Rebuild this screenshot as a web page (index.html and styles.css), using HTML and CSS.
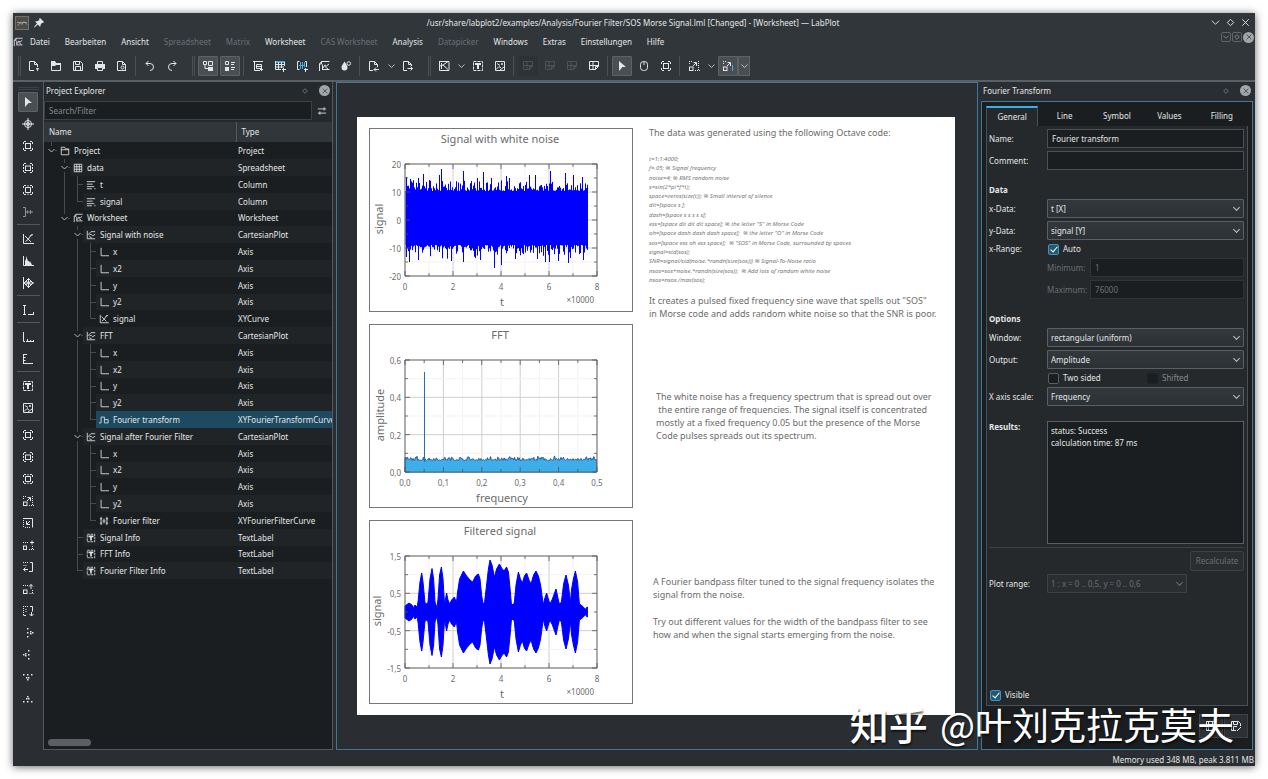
FILE: index.html
```html
<!DOCTYPE html>
<html lang="de">
<head>
  <meta charset="UTF-8">
  <meta name="viewport" content="width=device-width, initial-scale=1.0">
  <title>SOS Morse Signal.lml - LabPlot</title>
  <link rel="stylesheet" href="styles.css">
</head>
<body>

<div class="window">

  <!-- Title bar -->
  <header class="titlebar">
    <div class="title-left"><span class="app-icon" data-icon="app"></span><span data-icon="pin"></span></div>
    <div class="title-text">/usr/share/labplot2/examples/Analysis/Fourier Filter/SOS Morse Signal.lml [Changed] - [Worksheet] — LabPlot</div>
    <div class="title-right">
      <button aria-label="Minimize" data-icon="down"></button>
      <button aria-label="Maximize" data-icon="diamond"></button>
      <button aria-label="Close" data-icon="close"></button>
    </div>
  </header>

  <!-- Menu -->
  <nav class="menubar">
    <span class="menu-icon" data-icon="worksheet"></span>
    <button>Datei</button>
    <button>Bearbeiten</button>
    <button>Ansicht</button>
    <button disabled>Spreadsheet</button>
    <button disabled>Matrix</button>
    <button>Worksheet</button>
    <button disabled>CAS Worksheet</button>
    <button>Analysis</button>
    <button disabled>Datapicker</button>
    <button>Windows</button>
    <button>Extras</button>
    <button>Einstellungen</button>
    <button>Hilfe</button>
    <div class="mdi-buttons">
      <button class="boxed" aria-label="Minimize worksheet" data-icon="down"></button>
      <button class="boxed" aria-label="Restore worksheet" data-icon="diamond"></button>
      <button class="round-close" aria-label="Close worksheet" data-icon="close"></button>
    </div>
  </nav>

  <!-- Toolbar -->
  <div class="toolbar">
    <i class="grip"></i>
    <button class="tool" aria-label="New" data-icon="new"></button>
    <button class="tool" aria-label="Open" data-icon="open"></button>
    <button class="tool" aria-label="Save" data-icon="save"></button>
    <button class="tool" aria-label="Print" data-icon="print"></button>
    <button class="tool" aria-label="Print preview" data-icon="preview"></button>
    <i class="sep"></i>
    <button class="tool" aria-label="Undo" data-icon="undo"></button>
    <button class="tool" aria-label="Redo" data-icon="redo"></button>
    <i class="grip spaced"></i>
    <button class="tool checked" aria-label="Project explorer" data-icon="explorer"></button>
    <button class="tool checked" aria-label="Properties" data-icon="properties"></button>
    <i class="sep"></i>
    <button class="tool" aria-label="New workbook" data-icon="workbook"></button>
    <button class="tool" aria-label="New spreadsheet" data-icon="sheetadd"></button>
    <button class="tool" aria-label="New matrix" data-icon="matrixadd"></button>
    <button class="tool" aria-label="New worksheet" data-icon="worksheet"></button>
    <button class="tool" aria-label="Color maps" data-icon="drop"></button>
    <i class="sep"></i>
    <button class="tool" aria-label="Import" data-icon="import"></button>
    <button class="drop" aria-label="Import menu" data-icon="down"></button>
    <button class="tool" aria-label="Export" data-icon="export"></button>
    <i class="grip spaced"></i>
    <button class="tool" aria-label="Add plot" data-icon="plot"></button>
    <button class="drop" aria-label="Plot menu" data-icon="down"></button>
    <button class="tool" aria-label="Add text" data-icon="text"></button>
    <button class="tool" aria-label="Add image" data-icon="image"></button>
    <i class="sep"></i>
    <button class="tool shaded" disabled aria-label="Vertical layout" data-icon="layout"></button>
    <button class="tool" disabled aria-label="Horizontal layout" data-icon="layout"></button>
    <button class="tool" disabled aria-label="Grid layout" data-icon="layout"></button>
    <button class="tool" aria-label="Break layout" data-icon="layout"></button>
    <i class="sep"></i>
    <button class="tool checked" aria-label="Select" data-icon="pointer"></button>
    <button class="tool" aria-label="Navigate" data-icon="mouse"></button>
    <button class="tool" aria-label="Zoom selection" data-icon="select"></button>
    <i class="sep"></i>
    <button class="tool" aria-label="Zoom" data-icon="zoomin"></button>
    <button class="drop" aria-label="Zoom menu" data-icon="down"></button>
    <button class="tool checked" aria-label="Magnification" data-icon="magnify"></button>
    <button class="drop checked" aria-label="Magnification menu" data-icon="down"></button>
  </div>

  <main class="content">

    <!-- Plot tools -->
    <div class="side-tools">
      <i class="hgrip"></i>
      <button class="tool checked" aria-label="Select and edit" data-icon="pointer"></button>
      <button class="tool" aria-label="Crosshair" data-icon="cross"></button>
      <button class="tool" aria-label="Select region" data-icon="select"></button>
      <button class="tool" aria-label="Select x region" data-icon="selectx"></button>
      <button class="tool" aria-label="Select y region" data-icon="selecty"></button>
      <button class="tool dim" aria-label="Cursor" data-icon="cursor"></button>
      <i class="hsep"></i>
      <button class="tool" aria-label="Add curve" data-icon="curve"></button>
      <button class="tool" aria-label="Add histogram" data-icon="histogram"></button>
      <button class="tool" aria-label="Add equation curve" data-icon="equation"></button>
      <i class="hsep"></i>
      <button class="tool" aria-label="Add legend" data-icon="legend"></button>
      <i class="hsep"></i>
      <button class="tool" aria-label="Add horizontal axis" data-icon="axisx"></button>
      <button class="tool" aria-label="Add vertical axis" data-icon="axisy"></button>
      <i class="hsep"></i>
      <button class="tool" aria-label="Add label" data-icon="text"></button>
      <button class="tool" aria-label="Add picture" data-icon="image"></button>
      <i class="hsep"></i>
      <button class="tool" aria-label="Auto scale" data-icon="select"></button>
      <button class="tool" aria-label="Auto scale x" data-icon="selectx"></button>
      <button class="tool" aria-label="Auto scale y" data-icon="selecty"></button>
      <button class="tool" aria-label="Zoom in" data-icon="zoomin"></button>
      <button class="tool" aria-label="Zoom out" data-icon="zoomout"></button>
      <button class="tool" aria-label="Zoom in x" data-icon="zoominx"></button>
      <button class="tool" aria-label="Zoom out x" data-icon="zoomoutx"></button>
      <button class="tool" aria-label="Zoom in y" data-icon="zoominy"></button>
      <button class="tool" aria-label="Zoom out y" data-icon="zoomouty"></button>
      <button class="tool" aria-label="Shift left" data-icon="shiftl"></button>
      <button class="tool" aria-label="Shift right" data-icon="shiftr"></button>
      <button class="tool" aria-label="Shift up" data-icon="shiftu"></button>
      <button class="tool" aria-label="Shift down" data-icon="shiftd"></button>
    </div>

    <!-- Project Explorer -->
    <section class="explorer">
      <div class="dock-title">
        <h2>Project Explorer</h2>
        <button aria-label="Float" data-icon="diamond"></button>
        <button class="round-close" aria-label="Close" data-icon="close"></button>
      </div>
      <div class="search">
        <input type="text" placeholder="Search/Filter" aria-label="Search/Filter">
        <button aria-label="Filter options" data-icon="options"></button>
      </div>
      <div class="tree-view">
        <table class="tree">
          <thead><tr><th>Name</th><th>Type</th></tr></thead>
          <tbody id="tree"></tbody>
        </table>
        <div class="scroll-thumb"></div>
      </div>
    </section>

    <!-- Worksheet -->
    <section class="worksheet">
      <div class="paper">
        <svg class="plot" id="plotNoise" viewBox="0 0 264 184"></svg>
        <div class="note first">
          <p>The data was generated using the following Octave code:</p>
          <div class="code">
            <span>t=1:1:4000;</span>
            <span>f=.05; % Signal frequency</span>
            <span>noise=4; % RMS random noise</span>
            <span>s=sin(2*pi*f*t);</span>
            <span>space=zeros(size(t)); % Small interval of silence</span>
            <span>dit=[space s ];</span>
            <span>dash=[space s s s s s];</span>
            <span>ess=[space dit dit dit space]; % the letter "S" in Morse Code</span>
            <span>oh=[space dash dash dash space];  % the letter "O" in Morse Code</span>
            <span>sos=[space ess oh ess space];  % "SOS" in Morse Code, surrounded by spaces</span>
            <span>signal=std(sos);</span>
            <span>SNR=signal/std(noise.*randn(size(sos))) % Signal-To-Noise ratio</span>
            <span>nsos=sos+noise.*randn(size(sos));  % Add lots of random white noise</span>
            <span>nsos=nsos./max(sos);</span>
          </div>
          <p>It creates a pulsed fixed frequency sine wave that spells out "SOS"<br>in Morse code and adds random white noise so that the SNR is poor.</p>
        </div>
        <svg class="plot" id="plotFft" viewBox="0 0 264 184"></svg>
        <div class="note middle">
          <p>The white noise has a frequency spectrum that is spread out over<br>&nbsp;the entire range of frequencies. The signal itself is concentrated<br>mostly at a fixed frequency 0.05 but the presence of the Morse<br>Code pulses spreads out its spectrum.</p>
        </div>
        <svg class="plot" id="plotFiltered" viewBox="0 0 264 184"></svg>
        <div class="note last">
          <p>A Fourier bandpass filter tuned to the signal frequency isolates the<br>signal from the noise.</p>
          <p>Try out different values for the width of the bandpass filter to see<br>how and when the signal starts emerging from the noise.</p>
        </div>
      </div>
    </section>

    <!-- Properties -->
    <section class="properties">
      <div class="dock-title">
        <h2>Fourier Transform</h2>
        <button aria-label="Float" data-icon="diamond"></button>
        <button class="round-close" aria-label="Close" data-icon="close"></button>
      </div>
      <div class="prop-body">
        <div class="tabs">
          <button class="active">General</button>
          <button>Line</button>
          <button>Symbol</button>
          <button>Values</button>
          <button>Filling</button>
        </div>
        <form class="page">
          <div class="row"><label for="name">Name:</label><input id="name" type="text" value="Fourier transform"></div>
          <div class="row"><label for="comment">Comment:</label><input id="comment" type="text"></div>

          <h3>Data</h3>
          <div class="row"><label for="xdata">x-Data:</label><div class="select"><select id="xdata"><option>t [X]</option></select></div></div>
          <div class="row"><label for="ydata">y-Data:</label><div class="select"><select id="ydata"><option>signal [Y]</option></select></div></div>
          <div class="row low"><span>x-Range:</span><label class="check"><input type="checkbox" checked>Auto</label></div>
          <div class="row"><span></span><div class="sub"><label for="min">Minimum:</label><input id="min" type="text" value="1" disabled></div></div>
          <div class="row"><span></span><div class="sub"><label for="max">Maximum:</label><input id="max" type="text" value="76000" disabled></div></div>

          <h3>Options</h3>
          <div class="row"><label for="win">Window:</label><div class="select"><select id="win"><option>rectangular (uniform)</option></select></div></div>
          <div class="row"><label for="out">Output:</label><div class="select"><select id="out"><option>Amplitude</option></select></div></div>
          <div class="row low"><span></span><div class="checks"><label class="check"><input type="checkbox">Two sided</label><label class="check off"><input type="checkbox" disabled>Shifted</label></div></div>
          <div class="row"><label for="scale">X axis scale:</label><div class="select"><select id="scale"><option>Frequency</option></select></div></div>

          <div class="row results"><label for="results">Results:</label><textarea id="results" readonly>status: Success
calculation time: 87 ms</textarea></div>
          <hr>
          <button type="button" class="recalc" disabled>Recalculate</button>
          <div class="row"><label for="range">Plot range:</label><div class="select short"><select id="range" disabled><option>1 : x = 0 .. 0,5, y = 0 .. 0,6</option></select></div></div>
          <label class="check visible"><input type="checkbox" checked>Visible</label>
        </form>
        <div class="prop-buttons">
          <button aria-label="Save as default" data-icon="save"></button>
          <button aria-label="Save template" data-icon="saveas"></button>
        </div>
      </div>
    </section>
  </main>

  <footer class="statusbar">Memory used 348 MB, peak 3.811 MB</footer>
</div>

<div class="watermark"><b>知乎</b> @叶刘克拉克莫夫</div>

<script src="script.js"></script>
</body>
</html>
```
FILE: styles.css
```css
:root {
  --header: #31363b;
  --bg: #2a2e32;
  --view: #1b1e20;
  --alt: #212427;
  --line: #555a5e;
  --blue: #3f7796;
  --text: #e4e6e7;
  --dim: #6a6f73;
}

* {
  box-sizing: border-box;
}

body {
  margin: 0;
  padding: 13px;
  height: 100vh;
  background: #fff;
  color: var(--text);
  font-family: "Noto Sans", "Noto Sans CJK SC", sans-serif;
  font-size: 8px;
  line-height: 12px;
  overflow: hidden;
}

button, input, select, textarea {
  font: inherit;
  color: inherit;
}

button {
  display: flex;
  align-items: center;
  justify-content: center;
  padding: 0;
  border: 0;
  background: none;
  white-space: nowrap;
}

button:disabled {
  color: var(--dim);
}

svg {
  display: block;
}

.icon {
  width: 12px;
  height: 12px;
  fill: none;
  stroke: currentColor;
  stroke-width: 1;
}

.icon .f {
  fill: currentColor;
  stroke: none;
}

.icon .b {
  stroke: #3daee9;
}

.window {
  display: flex;
  flex-direction: column;
  height: 100%;
  background: var(--bg);
  box-shadow: 0 1px 8px rgba(0, 0, 0, 0.6);
}

/* title bar and menu */
.titlebar {
  display: flex;
  align-items: center;
  height: 19px;
  padding: 0 4px 0 2px;
  background: var(--header);
}

.title-left, .title-right {
  display: flex;
  align-items: center;
  flex: 0 0 60px;
  gap: 4px;
}

.title-right {
  justify-content: flex-end;
}

.title-right .icon {
  width: 11px;
  height: 11px;
}

.app-icon {
  width: 14px;
  background: #4c4c4a;
  border: 1px solid #777066;
  color: #9a9a9a;
}

.title-text {
  flex: 1;
  text-align: center;
}

.menubar {
  display: flex;
  align-items: center;
  gap: 15px;
  height: 19px;
  background: var(--header);
}

.menu-icon .icon {
  width: 10px;
  height: 10px;
}

.menu-icon {
  margin-right: -8px;
}

.mdi-buttons {
  display: flex;
  gap: 1px;
  margin: -9px 1px 0 auto;
}

.mdi-buttons .boxed {
  width: 10px;
  height: 10px;
  border: 1px solid #5f6468;
  border-radius: 2px;
  color: #a3a6a8;
}

.mdi-buttons .icon {
  width: 8px;
  height: 8px;
}

.round-close {
  width: 11px;
  height: 11px;
  border-radius: 50%;
  background: #a3a6a8;
  color: var(--bg);
}

.round-close .icon {
  width: 8px;
  height: 8px;
}

/* toolbar */
.toolbar {
  display: flex;
  align-items: center;
  gap: 2px;
  height: 31px;
  padding: 1px 0 0 5px;
  background: var(--header);
  border-bottom: 2px solid #596167;
}

.tool {
  flex: none;
  width: 20px;
  height: 20px;
  border-radius: 1px;
}

.drop {
  width: 10px;
  height: 20px;
}

.drop .icon {
  width: 9px;
}

.checked {
  background: #4a4f54;
  border: 1px solid #5d6266;
}

.drop.checked {
  margin-left: -2px;
  width: 12px;
}

.shaded {
  background: #2d3236;
}

.tool:disabled .icon {
  opacity: 0.5;
}

.dim {
  color: #8d9194;
}

.grip, .sep {
  width: 4px;
  height: 20px;
  border-left: 1px solid #4b5055;
}

.sep {
  margin-left: 1px;
  width: 3px;
}

.grip {
  border-right: 1px solid #4b5055;
  width: 3px;
  margin-right: 1px;
}

.spaced {
  margin-left: 8px;
}

/* main area */
.content {
  display: flex;
  flex: 1;
  min-height: 0;
}

.side-tools {
  display: flex;
  flex-direction: column;
  align-items: center;
  gap: 2px;
  width: 30px;
  padding-top: 5px;
}

.hgrip {
  width: 21px;
  height: 3px;
  border: 1px solid #3c4145;
  border-width: 1px 0;
}

.hsep {
  width: 23px;
  height: 3px;
  border-top: 1px solid #53585c;
}

.dock-title {
  display: flex;
  align-items: center;
  gap: 10px;
  height: 19px;
  padding: 0 2px 2px;
}

.dock-title h2 {
  flex: 1;
  margin: 0;
  font-size: 8px;
  font-weight: normal;
}

.dock-title .icon {
  width: 8px;
  height: 8px;
}

.dock-title button {
  color: #8d9194;
}

.dock-title .round-close {
  color: var(--bg);
}

/* project explorer */
.explorer {
  display: flex;
  flex-direction: column;
  width: 290px;
  border: 1px solid var(--line);
  border-top: 0;
  background: #25292c;
  overflow: hidden;
}

.search {
  display: flex;
  height: 21px;
  padding-bottom: 2px;
}

.search input {
  flex: 1;
  min-width: 0;
  padding: 0 4px;
  border: 1px solid #3d4144;
  background: var(--view);
}

.search input::placeholder {
  color: #84888b;
}

.search button {
  width: 20px;
}

.search .icon {
  width: 10px;
}

.tree-view {
  display: flex;
  flex-direction: column;
  flex: 1;
  background: var(--view);
}

.tree {
  width: 100%;
  table-layout: fixed;
  border-collapse: collapse;
}

.tree th {
  height: 20px;
  padding: 0 5px;
  background: var(--header);
  font-weight: normal;
  text-align: left;
}

.tree th:first-child {
  width: 192px;
  border-right: 1px solid #54595d;
}

.tree td {
  padding: 0;
  white-space: nowrap;
  overflow: hidden;
}

.tree td:last-child {
  padding-left: 2px;
}

.cell {
  display: flex;
  height: 17px;
}

.tree tr:nth-child(5n) .cell {
  height: 16px;
}

.guide {
  position: relative;
  flex: none;
  width: 13px;
}

.guide.v::before, .guide.end::before {
  content: "";
  position: absolute;
  left: 7px;
  top: 0;
  height: 100%;
  border-left: 1px solid #474b4e;
}

.guide.end::before {
  height: 50%;
}

.guide.h::after {
  content: "";
  position: absolute;
  left: 7px;
  top: 8px;
  width: 6px;
  border-top: 1px solid #474b4e;
}

.guide.open::after {
  left: 11px;
  width: 2px;
}

.guide .icon {
  position: relative;
  width: 9px;
  height: 9px;
  margin: 4px 0 4px 3px;
  background: var(--view);
}

.item {
  display: flex;
  align-items: center;
  flex: 1;
  gap: 4px;
  padding-left: 3px;
}

.item .icon {
  width: 10px;
  height: 10px;
}

.tree tr.alt .item, .tree tr.alt td:last-child {
  background: var(--alt);
}

.tree tr.selected .item, .tree tr.selected td:last-child {
  background: #1e4a61;
}

.scroll-thumb {
  width: 43px;
  height: 7px;
  margin: auto 0 3px 4px;
  border-radius: 4px;
  background: #5c6063;
}

/* worksheet */
.worksheet {
  flex: 1;
  margin: 0 3px;
  padding: 34px 22px 0 20px;
  border: 1px solid var(--blue);
  min-width: 0;
}

.paper {
  display: grid;
  grid-template-columns: 264px 1fr;
  grid-auto-rows: 184px;
  gap: 12px 16px;
  padding: 11px 8px 11px 12px;
  background: #fff;
  color: #6c6c6c;
  white-space: nowrap;
}

.plot {
  width: 264px;
  height: 184px;
}

.plot text {
  fill: #6c6c6c;
  font-size: 8px;
}

.plot .label {
  font-size: 11px;
}

.note {
  display: flex;
  flex-direction: column;
  justify-content: center;
  font-size: 9px;
  line-height: 13px;
}

.note p {
  margin: 0;
}

.note.first {
  justify-content: flex-start;
  margin-top: -2px;
}

.note.middle {
  padding-left: 7px;
}

.note.last {
  gap: 14px;
  padding: 0 0 8px 4px;
}

.code {
  display: flex;
  flex: none;
  flex-direction: column;
  justify-content: space-between;
  height: 130px;
  margin: 16px 0 9px;
  color: #777;
  font-size: 6px;
  line-height: 9px;
  font-style: italic;
  white-space: pre;
}

/* properties */
.properties {
  display: flex;
  flex-direction: column;
  width: 274px;
  padding-right: 2px;
}

.prop-body {
  display: flex;
  flex-direction: column;
  flex: 1;
  padding: 4px;
  border: 1px solid var(--blue);
  background: var(--view);
}

.tabs {
  display: grid;
  grid-template-columns: repeat(5, 1fr);
  height: 20px;
}

.tabs .active {
  background: #25292c;
  border: 1px solid #4b5054;
  border-top: 2px solid #3daee9;
  border-bottom: 0;
}

.page {
  display: flex;
  flex-direction: column;
  flex: 1;
  gap: 3px;
  padding: 3px 3px 4px 2px;
  border: 1px solid #4b5054;
  border-top: 0;
  background: #25292c;
}

.page h3 {
  margin: 11px 0 0;
  font-size: 8px;
  line-height: 12px;
}

.row {
  display: grid;
  grid-template-columns: 58px 1fr;
  align-items: center;
  min-height: 19px;
}

.row.low {
  min-height: 12px;
}

.page input[type="text"] {
  width: 100%;
  min-width: 0;
  height: 19px;
  padding: 0 4px;
  border: 1px solid #4b5054;
  background: var(--view);
}

.sub {
  display: flex;
  align-items: center;
  gap: 3px;
  color: var(--dim);
}

.sub label {
  flex: 0 0 40px;
}

.page .sub input {
  border-color: #303437;
}

.select {
  position: relative;
}

.select::after {
  content: "";
  position: absolute;
  right: 5px;
  top: 6px;
  width: 4px;
  height: 4px;
  border: solid #c0c3c5;
  border-width: 0 1px 1px 0;
  transform: rotate(45deg);
}

.select select {
  appearance: none;
  display: block;
  width: 100%;
  height: 19px;
  padding: 0 3px;
  border: 1px solid #5a5f63;
  border-radius: 1px;
  background: linear-gradient(#33383c, #2c3135);
}

.select.short {
  width: 140px;
}

.select select:disabled {
  color: var(--dim);
  border-color: #3d4245;
  background: #2a2e31;
  opacity: 1;
}

.select.short::after {
  border-color: var(--dim);
}

.check {
  display: flex;
  align-items: center;
  gap: 4px;
  height: 12px;
}

.check input {
  appearance: none;
  position: relative;
  width: 11px;
  height: 11px;
  margin: 0 0 0 1px;
  border: 1px solid #5a5f63;
  border-radius: 2px;
  background: var(--view);
}

.check input:checked {
  background: #245871;
  border-color: #4094bd;
}

.check input:checked::after {
  content: "";
  position: absolute;
  left: 3px;
  top: 0;
  width: 3px;
  height: 6px;
  border: solid #fff;
  border-width: 0 1px 1px 0;
  transform: rotate(40deg);
}

.check.off {
  color: #84888b;
}

.check.off input {
  border-color: #1f2224;
}

.checks {
  display: grid;
  grid-template-columns: 99px 1fr;
}

.results {
  align-items: start;
  margin-top: 12px;
  font-weight: bold;
}

.results textarea {
  width: 100%;
  height: 123px;
  padding: 3px;
  border: 1px solid #5a5f63;
  background: var(--view);
  font-weight: normal;
  resize: none;
}

.page hr {
  width: 100%;
  height: 1px;
  margin: 0;
  border: 0;
  background: #3d4144;
}

.recalc {
  align-self: flex-end;
  width: 54px;
  height: 20px;
  border: 1px solid #3d4245;
  border-radius: 2px;
  background: #2a2e31;
}

.visible {
  margin-top: auto;
}

.prop-buttons {
  display: flex;
  justify-content: flex-end;
  gap: 1px;
  margin: 8px 0 7px;
}

.prop-buttons button {
  width: 24px;
  height: 24px;
  border: 1px solid #3d4245;
  background: #2c3034;
}

.statusbar {
  height: 16px;
  padding: 4px 1px 0;
  text-align: right;
}

.watermark {
  position: absolute;
  right: 34px;
  bottom: 30px;
  color: #fff;
  font-family: "Noto Sans CJK SC", sans-serif;
  font-size: 37px;
  line-height: 50px;
  text-shadow: 1px 2px 2px rgba(0, 0, 0, 0.6);
  white-space: nowrap;
}

.watermark b {
  margin-right: 4px;
  font-size: 39px;
  font-weight: 500;
}
```
FILE: script.js
```js
// Icons, all drawn on a 12x12 grid
const corners = '<path d="M1.5 4V1.5H4M8 1.5h2.5V4M10.5 8v2.5H8M4 10.5H1.5V8" stroke-dasharray="2 1"/>';
const dots = pts => pts.map(p => `<rect class="f" x="${p[0]}" y="${p[1]}" width="1.5" height="1.5"/>`).join('');

const ICONS = {
  app: '<path d="M1 5.5h10M2 8.5l2-3 2 2 2-3 3 3"/>',
  pin: '<path class="f" d="M7 1l4 4-1 1-1-.3L7.5 8l-.3 2L4.8 7.6 1.5 10.5 1 10l3-3.4L2 4.5l2.2-.2L6.5 3 6 2z"/>',
  down: '<path d="M2 4l4 4 4-4"/>',
  diamond: '<path d="M6 2.5L9.5 6 6 9.5 2.5 6z"/>',
  close: '<path d="M2.5 2.5l7 7M9.5 2.5l-7 7"/>',
  new: '<path d="M6 10.5H1.5v-9h5l3 3V7M6.5 1.5v3h3"/><path class="f" d="M8 8h3l-1.5 3.5z"/>',
  open: '<path d="M1.5 10.5v-9h3l1 2h5v7z"/><path class="f" d="M1 1h4l1 2h5v2H6L5 6H1z"/>',
  save: '<path d="M1.5 1.5h7l2 2v7h-9zM3.5 1.5v3h4v-3M3.5 10.5v-4h5v4"/>',
  saveas: '<path d="M6 10.5H1.5v-9h7l2 2V6M3.5 1.5v3h4v-3M3.5 10.5v-4H7M7 11l4-4"/>',
  print: '<path d="M3.5 4V1.5h5V4M3.5 10.5v-3h5v3z"/><path class="f" d="M1 4h10v5H9V7H3v2H1z"/>',
  preview: '<path d="M10 10.5H1.5v-9h5l3 3v6M6.5 1.5v3h3"/><circle cx="6.5" cy="7.5" r="1.5"/>',
  undo: '<path d="M2 3.5h4a3.5 3.5 0 0 1 0 7M4.5 1L2 3.5 4.5 6"/>',
  redo: '<path d="M10 3.5H6a3.5 3.5 0 0 0 0 7M7.5 1L10 3.5 7.5 6"/>',
  explorer: '<path d="M1.5 1.5h3v3h-3zM6.5 1.5h4v4h-4zM3 4.5v4h3"/><path class="f" d="M6 7h5v4H6z"/>',
  properties: '<path d="M1.5 1.5h3v3h-3zM7 2.5h4M7 4.5h3M7 7.5h4M7 9.5h3"/><path class="f" d="M1 7h4v4H1z"/>',
  workbook: '<path d="M1 1.5h10M2.5 1.5v9H8M4.5 4.5h5v4h-5zM4.5 6.5h5M9.5 11V8M8 9.5h3"/>',
  sheetadd: '<path class="b" d="M1 2.5h10M1 1.5h10"/><path d="M1.5 1v8.5H7M1 4.5h9M1 7h9M4.5 2v8M7.5 2v6M10.5 2v4M8 9.5h4M9.5 8v4"/>',
  matrixadd: '<path class="b" d="M4.5 2v7M6.5 2v7M3 5.5h6M8.5 2v5"/><path d="M3.5 1.5h-2v8h2M9 1.5h1.5V7M8 9.5h4M9.5 8v4"/>',
  worksheet: '<path d="M1.5 11V4l2-2.5h8M3.5 1.5V4h-2M4.5 10V4.5M4.5 9.5h7M5 8l2-3 1.5 1L11 4M6.5 6L10 9"/>',
  drop: '<path class="f" d="M4.5 1.5C6 4 7.5 5.5 7.5 7.5a3 3 0 0 1-6 0c0-2 1.5-3.5 3-6z"/><circle cx="8.8" cy="3.5" r="1.8"/>',
  import: '<path d="M5 10.5H1.5v-9h5l3 3V7M6.5 1.5v3h3M6 9.5h5M8 7.5L6 9.5l2 2"/>',
  export: '<path d="M5 10.5H1.5v-9h5l3 3V6M6.5 1.5v3h3M5.5 8.5h5M8.5 6.5l2 2-2 2"/>',
  plot: '<path d="M1.5 1v9.5H11M1 1.5h10v9M2 6l3-1 5-3.5M5 5l5 4.5M3.5 3v6"/>',
  text: '<path d="M1.5 1.5h9v9h-9z" stroke-dasharray="3 1"/><path d="M3 4h6M6 4v5" stroke-width="2"/>',
  image: '<path d="M1.5 1.5h9v9h-9zM2 9.5l3-3 2 1.5M6 10l4-3M3 3.5l3 2M7.5 3.5h1v1h-1z"/>',
  layout: '<path d="M1.5 1.5h9v5l-3 3h-6zM1.5 5.5h9M5 1.5v8M7.5 9.5v-3h3"/>',
  pointer: '<path class="f" d="M3 1l7 6H6.5L3 11z"/>',
  mouse: '<rect x="2.5" y="1.5" width="7" height="9" rx="3"/><path d="M6 1.5V5"/>',
  select: corners + '<rect x="3.5" y="3.5" width="5" height="5"/>',
  selectx: corners + '<rect x="3.5" y="4" width="5" height="4.5"/><path d="M1.5 5v2M10.5 5v2"/>',
  selecty: corners + '<path d="M3.5 8.5v-5h5v5zM6 1v1.5M6 9.5V11"/>',
  cross: '<circle cx="6" cy="6" r="3.5"/><circle cx="6" cy="6" r="1.5"/><path d="M6 0v12M0 6h12"/>',
  cursor: '<path d="M1 1.5h2.5v9H1M4 6h7M8.5 4v4M5.5 4.5v3"/>',
  curve: '<path d="M1.5 1v9.5H12M3 3l6 6M9.5 1.5L6 6.5 3.5 8.5M8 3l3-1.5"/>',
  histogram: '<path d="M1.5 1v9.5H12"/><path class="f" d="M3 10V6l1-2V1l2 5h1v2l1-2 2 4z"/>',
  equation: '<path d="M1.5 0v12M2 6l4.5-4.5L11 6l-4.5 4.5zM4 4l5 4M9 4L4 8M2 6h10M6.5 1v10"/>',
  legend: '<path d="M1 1.5h3M2.5 1.5v9M1 10.5h3M6 10.5h6"/><path d="M11.5 8v3"/>',
  axisx: '<path d="M1.5 1v9.5H3M4 10.5h8M5.5 8v2M8.5 9v2M11.5 9v2"/>',
  axisy: '<path d="M1.5 1v10M1.5 1.5H5M1.5 4.5h2M1.5 7.5h2M2 10.5h9"/>',
  zoomin: '<rect x="1.5" y="7" width="3.5" height="3.5"/><path d="M5 6l3-3M5.5 2.5h3V6"/><path d="M1 1.5h3M10.5 1v10M7 10.5h5M1.5 3v2" stroke-dasharray="1 1"/>',
  zoomout: '<path d="M1 1.5h9.5v9M8 4L5 7M4.5 4v3.5H8"/><path d="M1.5 3v8M3 10.5h6" stroke-dasharray="1 1"/>',
  zoominx: '<rect x="1.5" y="7" width="3" height="3.5"/><path d="M8 3.5h4M10 1.5v4"/><path d="M1 3.5h5M7 10.5h5M10.5 7v4" stroke-dasharray="1 1"/>',
  zoomoutx: '<path d="M8 1.5h2.5v9H7M1.5 8.5H6M3.5 6.5l-2 2 2 2"/><path d="M1 1.5h6M1.5 4.5h4" stroke-dasharray="1 1"/>',
  zoominy: '<rect x="1.5" y="7" width="3.5" height="3.5"/><path d="M9 6V1.5M7 3.5l2-2 2 2"/><path d="M1 2.5h5M7.5 10.5H12M10.5 7v4" stroke-dasharray="1 1"/>',
  zoomouty: '<path d="M8 1.5h2.5v5M9.5 7v4M7.5 9l2 2 2-2M1.5 10.5H4"/><path d="M1 1.5h6M1.5 3v7M4 4v3" stroke-dasharray="1 1"/>',
  shiftl: dots([[5, 1], [5, 5], [5, 9], [8, 4], [8, 6], [10, 5]]),
  shiftr: dots([[6, 1], [6, 5], [6, 9], [3, 4], [3, 6], [1, 5]]),
  shiftu: dots([[1, 3], [5, 3], [9, 3], [4, 6], [6, 6], [5, 8]]),
  shiftd: dots([[1, 8], [5, 8], [9, 8], [4, 5], [6, 5], [5, 3]]),
  options: '<path d="M1 3.5h10M1 8.5h10M8.5 1.5v4M3.5 6.5v4"/>',
  magnify: '<rect x="1.5" y="7" width="3.5" height="3.5"/><path d="M5 6l3-3M5.5 2.5h3V6"/><path d="M1 1.5h3M1.5 3v2" stroke-dasharray="1 1"/><path class="b" d="M10.5 5v6"/>',
  folder: '<path d="M1.5 10.5v-9h4l1 2h4v7zM1.5 4.5h9"/>',
  sheet: '<path d="M1.5 1.5h9v9h-9zM1.5 4.5h9M1.5 7.5h9M4.5 1.5v9M7.5 1.5v9"/>',
  column: '<path d="M1 2h10M1 5h7M1 8h9M1 10.5h6M10 10.5h1.5"/>',
  cplot: '<path d="M1.5 1v9.5H11M2 6l4-4h5M4 6l2-1 2 2 3-2M4 8l3 1.5"/>',
  axis: '<path d="M2.5 1v9.5H12"/>',
  transform: '<path d="M0 9.5h2.5v-7h4v7h4.5v-4h-4.5"/>',
  filter: '<path d="M2.5 1v10M9.5 1v10M1 3.5h3M8 3.5h3M1 8.5h3M8 8.5h3M4 6h4M6 3v6"/>'
};

function icon(name) {
  return `<svg class="icon" viewBox="0 0 12 12" aria-hidden="true">${ICONS[name]}</svg>`;
}

document.querySelectorAll('[data-icon]').forEach(el => {
  el.innerHTML = icon(el.dataset.icon);
});

// Project tree: level, icon, name, type
const axes = level => ['x', 'x2', 'y', 'y2'].map(n => [level, 'axis', n, 'Axis']);
const items = [
  [0, 'folder', 'Project', 'Project'],
  [1, 'sheet', 'data', 'Spreadsheet'],
  [2, 'column', 't', 'Column'],
  [2, 'column', 'signal', 'Column'],
  [1, 'worksheet', 'Worksheet', 'Worksheet'],
  [2, 'cplot', 'Signal with noise', 'CartesianPlot'],
  ...axes(3),
  [3, 'curve', 'signal', 'XYCurve'],
  [2, 'cplot', 'FFT', 'CartesianPlot'],
  ...axes(3),
  [3, 'transform', 'Fourier transform', 'XYFourierTransformCurve'],
  [2, 'cplot', 'Signal after Fourier Filter', 'CartesianPlot'],
  ...axes(3),
  [3, 'filter', 'Fourier filter', 'XYFourierFilterCurve'],
  [2, 'text', 'Signal Info', 'TextLabel'],
  [2, 'text', 'FFT Info', 'TextLabel'],
  [2, 'text', 'Fourier Filter Info', 'TextLabel']
];

// is there a later sibling on this level?
function continues(index, level) {
  for (let i = index + 1; i < items.length; i++) {
    if (items[i][0] < level) return false;
    if (items[i][0] === level) return true;
  }
  return false;
}

document.getElementById('tree').innerHTML = items.map(([level, ic, name, type], i) => {
  let guides = '';
  for (let k = 0; k <= level; k++) {
    const more = continues(i, k);
    if (k < level) {
      guides += `<span class="guide ${more ? 'v' : ''}"></span>`;
    } else {
      const open = items[i + 1] && items[i + 1][0] > level;
      guides += `<span class="guide h ${more ? 'v' : 'end'} ${open ? 'open' : ''}">${open ? icon('down') : ''}</span>`;
    }
  }
  const cls = name === 'Fourier transform' ? 'selected' : (i % 2 ? 'alt' : '');
  return `<tr class="${cls}"><td><div class="cell">${guides}<span class="item">${icon(ic)}${name}</span></div></td><td>${type}</td></tr>`;
}).join('');

// Plots
const X0 = 36, X1 = 228, Y0 = 36, Y1 = 148;

let seed = 7;
function rnd() {
  seed = (seed * 16807) % 2147483647;
  return seed / 2147483647;
}

function drawPlot(id, o) {
  const xs = o.xLabels, ys = o.yLabels;
  const dx = (X1 - X0) / (xs.length - 1), dy = (Y1 - Y0) / (ys.length - 1);
  let grid = '', ticks = '', labels = '';
  for (let i = 0; i <= (xs.length - 1) * 2; i++) {
    const x = X0 + i * dx / 2, len = i % 2 ? 3 : 5;
    grid += `<path d="M${x} ${Y0}V${Y1}" stroke="${i % 2 ? '#f3f3f3' : '#cfcfcf'}"/>`;
    ticks += `M${x} ${Y0}v${len}M${x} ${Y1}v${-len}`;
    if (i % 2 === 0) labels += `<text x="${x}" y="162" text-anchor="middle">${xs[i / 2]}</text>`;
  }
  for (let i = 0; i <= (ys.length - 1) * 2; i++) {
    const y = Y0 + i * dy / 2, len = i % 2 ? 3 : 5;
    grid += `<path d="M${X0} ${y}H${X1}" stroke="${i % 2 ? '#f3f3f3' : '#cfcfcf'}"/>`;
    ticks += `M${X0} ${y}h${len}M${X1} ${y}h${-len}`;
    if (i % 2 === 0) labels += `<text x="32" y="${y + 4}" text-anchor="end">${ys[i / 2]}</text>`;
  }
  document.getElementById(id).innerHTML =
    '<rect x="0.5" y="0.5" width="263" height="183" fill="none" stroke="#777"/>' + grid + o.curve +
    `<path d="M${X0} ${Y0}H${X1}V${Y1}H${X0}z${ticks}" fill="none" stroke="#555" stroke-opacity="0.8"/>` + labels +
    `<text class="label" x="131" y="15" text-anchor="middle">${o.title}</text>` +
    `<text class="label" x="133" y="178" text-anchor="middle">${o.xTitle}</text>` +
    `<text class="label" transform="translate(${o.yPos} 91) rotate(-90)" text-anchor="middle">${o.yTitle}</text>` +
    (o.factor ? `<text x="225" y="175" text-anchor="end">${o.factor}</text>` : '');
}

// white noise: random bars plus the tall outliers
let noise = '';
for (let x = 37; x < 218.5; x += 1) {
  const top = 63 - rnd() * rnd() * 13, bottom = 117 + rnd() * rnd() * 14;
  noise += `M${x + 0.5} ${top.toFixed(1)}V${bottom.toFixed(1)}`;
}
const peaks = [[37, 49], [41, 51], [49, 50], [54, 46], [60, 52], [70, 47], [72, 41], [94, 43], [108, 50], [114, 44], [122, 50], [137, 48], [140, 50],
  [160, 47], [166, 47], [181, 43], [196, 45], [204, 47], [213, 49]];
const dips = [[37, 129], [40, 134], [49, 132], [82, 133], [94, 134], [111, 132], [125, 140], [132, 137], [146, 131], [168, 131], [176, 134],
  [180, 134], [189, 133], [199, 135], [214, 132]];
peaks.forEach(p => noise += `M${p[0] + 0.5} ${p[1]}V90`);
dips.forEach(p => noise += `M${p[0] + 0.5} ${p[1]}V90`);

drawPlot('plotNoise', {
  title: 'Signal with white noise', xTitle: 't', yTitle: 'signal', yPos: 14, factor: '×10000',
  xLabels: ['0', '2', '4', '6', '8'], yLabels: ['20', '10', '0', '-10', '-20'],
  curve: `<path d="${noise}" stroke="#00f" fill="none"/><path d="M36.5 63H219v54H36.5z" fill="#00f"/>`
});

// spectrum
let fft = `M${X0} ${Y1}`;
for (let x = X0; x <= X1; x += 0.8) {
  fft += `L${x.toFixed(1)} ${(136.5 - rnd() * rnd() * 5).toFixed(1)}`;
}
drawPlot('plotFft', {
  title: 'FFT', xTitle: 'frequency', yTitle: 'amplitude', yPos: 15,
  xLabels: ['0,0', '0,1', '0,2', '0,3', '0,4', '0,5'], yLabels: ['0,6', '0,4', '0,2', '0,0'],
  curve: `<path d="${fft}V${Y1}z" fill="#3daee9" stroke="#2b5c9c"/><path d="M37 137H227V148H37z" fill="#3daee9"/><path d="M55.5 48V138" stroke="#2b6cab"/>`
});

// envelope of the filtered signal (x, half height)
const env = [[36, 6], [40, 9], [43, 7], [44, 4], [46, 7], [48, 5], [49, 10], [51, 30], [52.7, 39], [54, 30], [56, 9], [58, 8], [59, 10], [61, 33],
  [63, 43.5], [64.6, 33], [66, 10], [68, 4], [69, 13], [70.6, 37], [72.4, 45], [74, 33], [75.4, 10], [76, 10], [77.6, 19], [79, 12], [80.6, 8],
  [82.6, 12], [85.4, 15], [87.4, 9], [88.6, 20], [90.6, 33], [94.4, 41], [97.6, 36], [101, 32], [103.6, 30], [106.6, 36], [109.4, 38], [111, 33],
  [112.6, 17], [114, 8], [115.6, 10], [117.6, 27], [119.4, 43], [121, 52], [123, 47], [125.4, 35], [127.6, 43], [130.4, 48], [132.6, 44],
  [135, 41], [137.6, 45], [139.4, 40], [141.4, 20], [142.4, 8], [144.4, 7], [145.4, 10], [147, 27], [149.4, 40], [151.4, 33], [153.4, 29],
  [155.4, 36], [157.6, 39], [160, 32], [162, 28], [164.6, 37], [167, 41], [169.4, 36], [171.6, 27], [173.6, 12], [174.4, 7], [175.6, 13],
  [177.6, 19], [179.6, 12], [181, 8], [183.4, 13], [187, 23], [189.4, 12], [190.4, 8], [192.4, 10], [194.6, 28], [197, 37], [199.4, 27],
  [201.4, 10], [202.6, 23], [204.4, 33], [206.4, 41], [208.6, 30], [210.4, 8], [212, 7], [214.4, 5], [216, 3], [217, 3], [218, 5], [218.4, 5]];
const upper = env.map(p => `${p[0]} ${92 - p[1]}`);
const lower = env.map(p => `${p[0]} ${92 + p[1]}`).reverse();
drawPlot('plotFiltered', {
  title: 'Filtered signal', xTitle: 't', yTitle: 'signal', yPos: 12, factor: '×10000',
  xLabels: ['0', '2', '4', '6', '8'], yLabels: ['1,5', '0,5', '-0,5', '-1,5'],
  curve: `<path d="M${upper.concat(lower).join('L')}z" fill="#00f" stroke="#00f" stroke-linejoin="round"/>`
});
```
